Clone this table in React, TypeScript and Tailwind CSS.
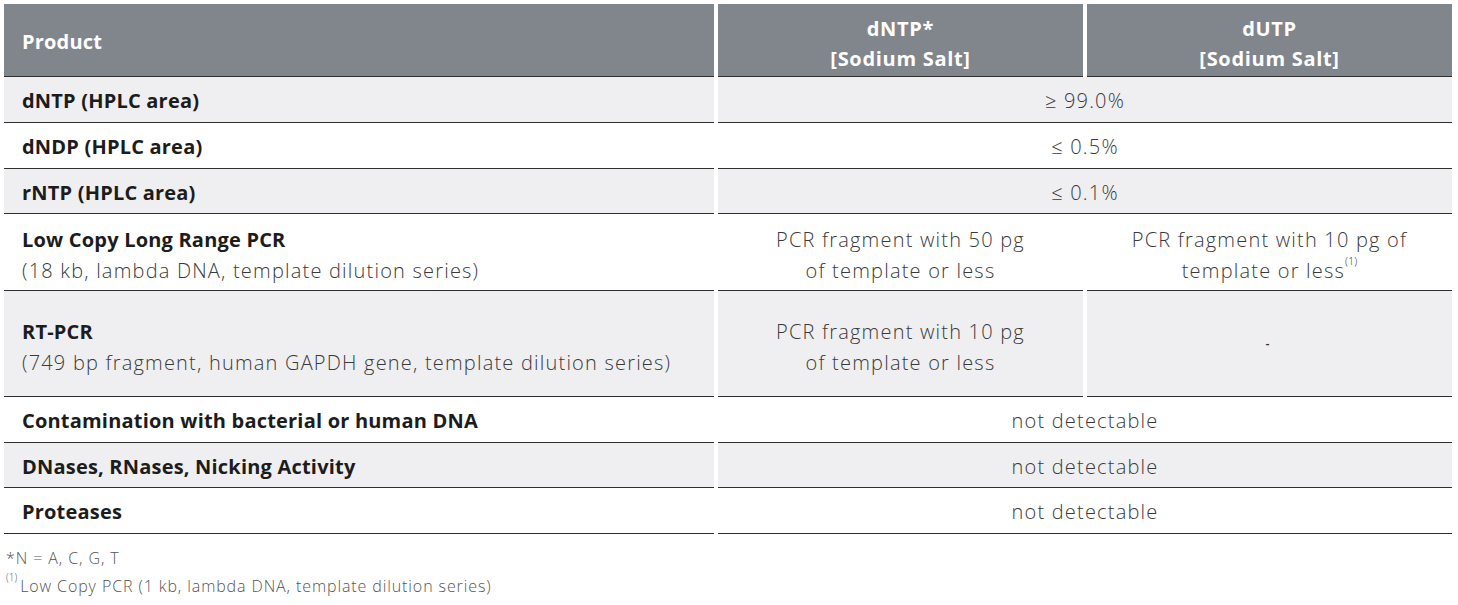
const rows = [
  { label: "dNTP (HPLC area)", span: "≥ 99.0%", h: "h-[46px]", shade: true },
  { label: "dNDP (HPLC area)", span: "≤ 0.5%", h: "h-[46px]", shade: false },
  { label: "rNTP (HPLC area)", span: "≤ 0.1%", h: "h-[45px]", shade: true },
];

const tailRows = [
  { label: "Contamination with bacterial or human DNA", span: "not detectable", h: "h-[46px]", shade: false },
  { label: "DNases, RNases, Nicking Activity", span: "not detectable", h: "h-[45px]", shade: true },
  { label: "Proteases", span: "not detectable", h: "h-[46px]", shade: false },
];

const font = { fontFamily: "'Open Sans', Roboto, sans-serif" };

function Cell({ children, className = "" }: { children: React.ReactNode; className?: string }) {
  return <div className={`border-b border-[#2e2e2e] flex items-center ${className}`}>{children}</div>;
}

export default function App() {
  return (
    <div className="bg-white w-[1458px] h-[605px] pt-1 pl-1" style={font}>
      <div className="grid grid-cols-[710px_365px_365px] gap-x-1 w-[1448px]">
        {/* header */}
        <Cell className="h-[73px] bg-[#81868d] px-[18px] pt-[4px] text-[20px] tracking-[0.2px] font-bold text-white">Product</Cell>
        <Cell className="h-[73px] bg-[#81868d] pt-[7px] justify-center text-center text-[20px] leading-[30px] tracking-[0.7px] font-bold text-white">
          <div>
            dNTP*
            <br />
            [Sodium Salt]
          </div>
        </Cell>
        <Cell className="h-[73px] bg-[#81868d] pt-[7px] justify-center text-center text-[20px] leading-[30px] tracking-[0.7px] font-bold text-white">
          <div>
            dUTP
            <br />
            [Sodium Salt]
          </div>
        </Cell>

        {rows.map((r) => (
          <Row key={r.label} {...r} />
        ))}

        {/* Low Copy Long Range PCR */}
        <Cell className="h-[77px] px-[18px] pt-[6px] bg-white">
          <div className="leading-[31px] text-[20px]">
            <div className="font-bold tracking-[0.2px] text-[#1c1c1c]">Low Copy Long Range PCR</div>
            <div className="font-light tracking-[1.2px] text-[#3a3a3a]">(18 kb, lambda DNA, template dilution series)</div>
          </div>
        </Cell>
        <Cell className="h-[77px] pt-[6px] justify-center text-center bg-white">
          <div className="leading-[31px] text-[20px] font-light tracking-[1.2px] text-[#3a3a3a]">
            PCR fragment with 50 pg
            <br />
            of template or less
          </div>
        </Cell>
        <Cell className="h-[77px] pt-[6px] justify-center text-center bg-white">
          <div className="leading-[31px] text-[20px] font-light tracking-[1.2px] text-[#3a3a3a]">
            PCR fragment with 10 pg of
            <br />
            template or less<sup className="text-[11px] tracking-normal align-[8px]">(1)</sup>
          </div>
        </Cell>

        {/* RT-PCR */}
        <Cell className="h-[106px] px-[18px] pt-[6px] bg-[#efeff1]">
          <div className="leading-[31px] text-[20px]">
            <div className="font-bold tracking-[0.2px] text-[#1c1c1c]">RT-PCR</div>
            <div className="font-light tracking-[1.2px] text-[#3a3a3a]">(749 bp fragment, human GAPDH gene, template dilution series)</div>
          </div>
        </Cell>
        <Cell className="h-[106px] pt-[6px] justify-center text-center bg-[#efeff1]">
          <div className="leading-[31px] text-[20px] font-light tracking-[1.2px] text-[#3a3a3a]">
            PCR fragment with 10 pg
            <br />
            of template or less
          </div>
        </Cell>
        <Cell className="h-[106px] justify-center bg-[#efeff1]">
          <span className="text-[11px] font-bold text-[#2a2a2a] translate-x-[-2px]">-</span>
        </Cell>

        {tailRows.map((r) => (
          <Row key={r.label} {...r} />
        ))}
      </div>

      <div className="mt-[10px] pl-[2px] text-[16px] font-light tracking-[0.9px] text-[#555] leading-[28px]">
        <div>*N = A, C, G, T</div>
        <div>
          <sup className="text-[10px] tracking-normal align-[6px] mr-[3px]">(1)</sup>Low Copy PCR (1 kb, lambda DNA, template dilution series)
        </div>
      </div>
    </div>
  );
}

function Row({ label, span, h, shade }: { label: string; span: string; h: string; shade: boolean }) {
  const bg = shade ? "bg-[#efeff1]" : "bg-white";
  return (
    <>
      <Cell className={`${h} ${bg} px-[18px] pt-[3px] text-[20px] font-bold tracking-[0.2px] text-[#1c1c1c]`}>{label}</Cell>
      <Cell className={`${h} ${bg} pt-[3px] col-span-2 justify-center text-[20px] font-light tracking-[1.2px] text-[#3a3a3a]`}>{span}</Cell>
    </>
  );
}
